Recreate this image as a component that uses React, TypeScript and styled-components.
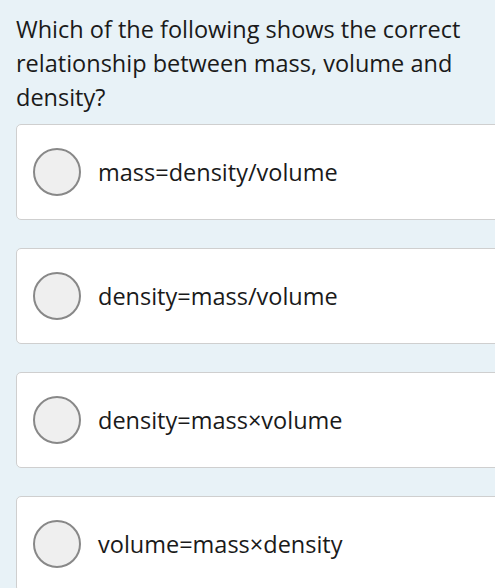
import styled, { createGlobalStyle } from "styled-components";

const GlobalStyle = createGlobalStyle`
  html, body {
    margin: 0;
    padding: 0;
    background: #e8f2f7;
  }
`;

const Page = styled.div`
  height: 588px;
  overflow: hidden;
  padding: 12px 0 0 16px;
  box-sizing: border-box;
  font-family: "Open Sans", "Liberation Sans", sans-serif;
  color: #1a1a1a;
`;

const Question = styled.h2`
  margin: 0 0 10px;
  font-size: 23.5px;
  font-weight: 400;
  line-height: 34px;
  padding-right: 20px;
`;

const Options = styled.div`
  display: flex;
  flex-direction: column;
  gap: 28px;
  margin-right: -30px;
`;

const Option = styled.label`
  display: flex;
  align-items: center;
  gap: 17px;
  height: 94px;
  padding-left: 16px;
  background: #ffffff;
  border: 1px solid #cfcfcf;
  border-radius: 5px;
  cursor: pointer;
`;

const Radio = styled.span`
  flex: none;
  width: 44px;
  height: 44px;
  border-radius: 50%;
  border: 2px solid #888888;
  background: #efefef;
`;

const OptionText = styled.span`
  font-size: 23.5px;
  color: #1a1a1a;
`;

const choices = [
  "mass=density/volume",
  "density=mass/volume",
  "density=mass\u00d7volume",
  "volume=mass\u00d7density",
];

export default function App() {
  return (
    <>
      <GlobalStyle />
      <Page>
        <Question>
          Which of the following shows the correct relationship between mass,
          volume and density?
        </Question>
        <Options>
          {choices.map((c) => (
            <Option key={c}>
              <Radio />
              <OptionText>{c}</OptionText>
            </Option>
          ))}
        </Options>
      </Page>
    </>
  );
}
